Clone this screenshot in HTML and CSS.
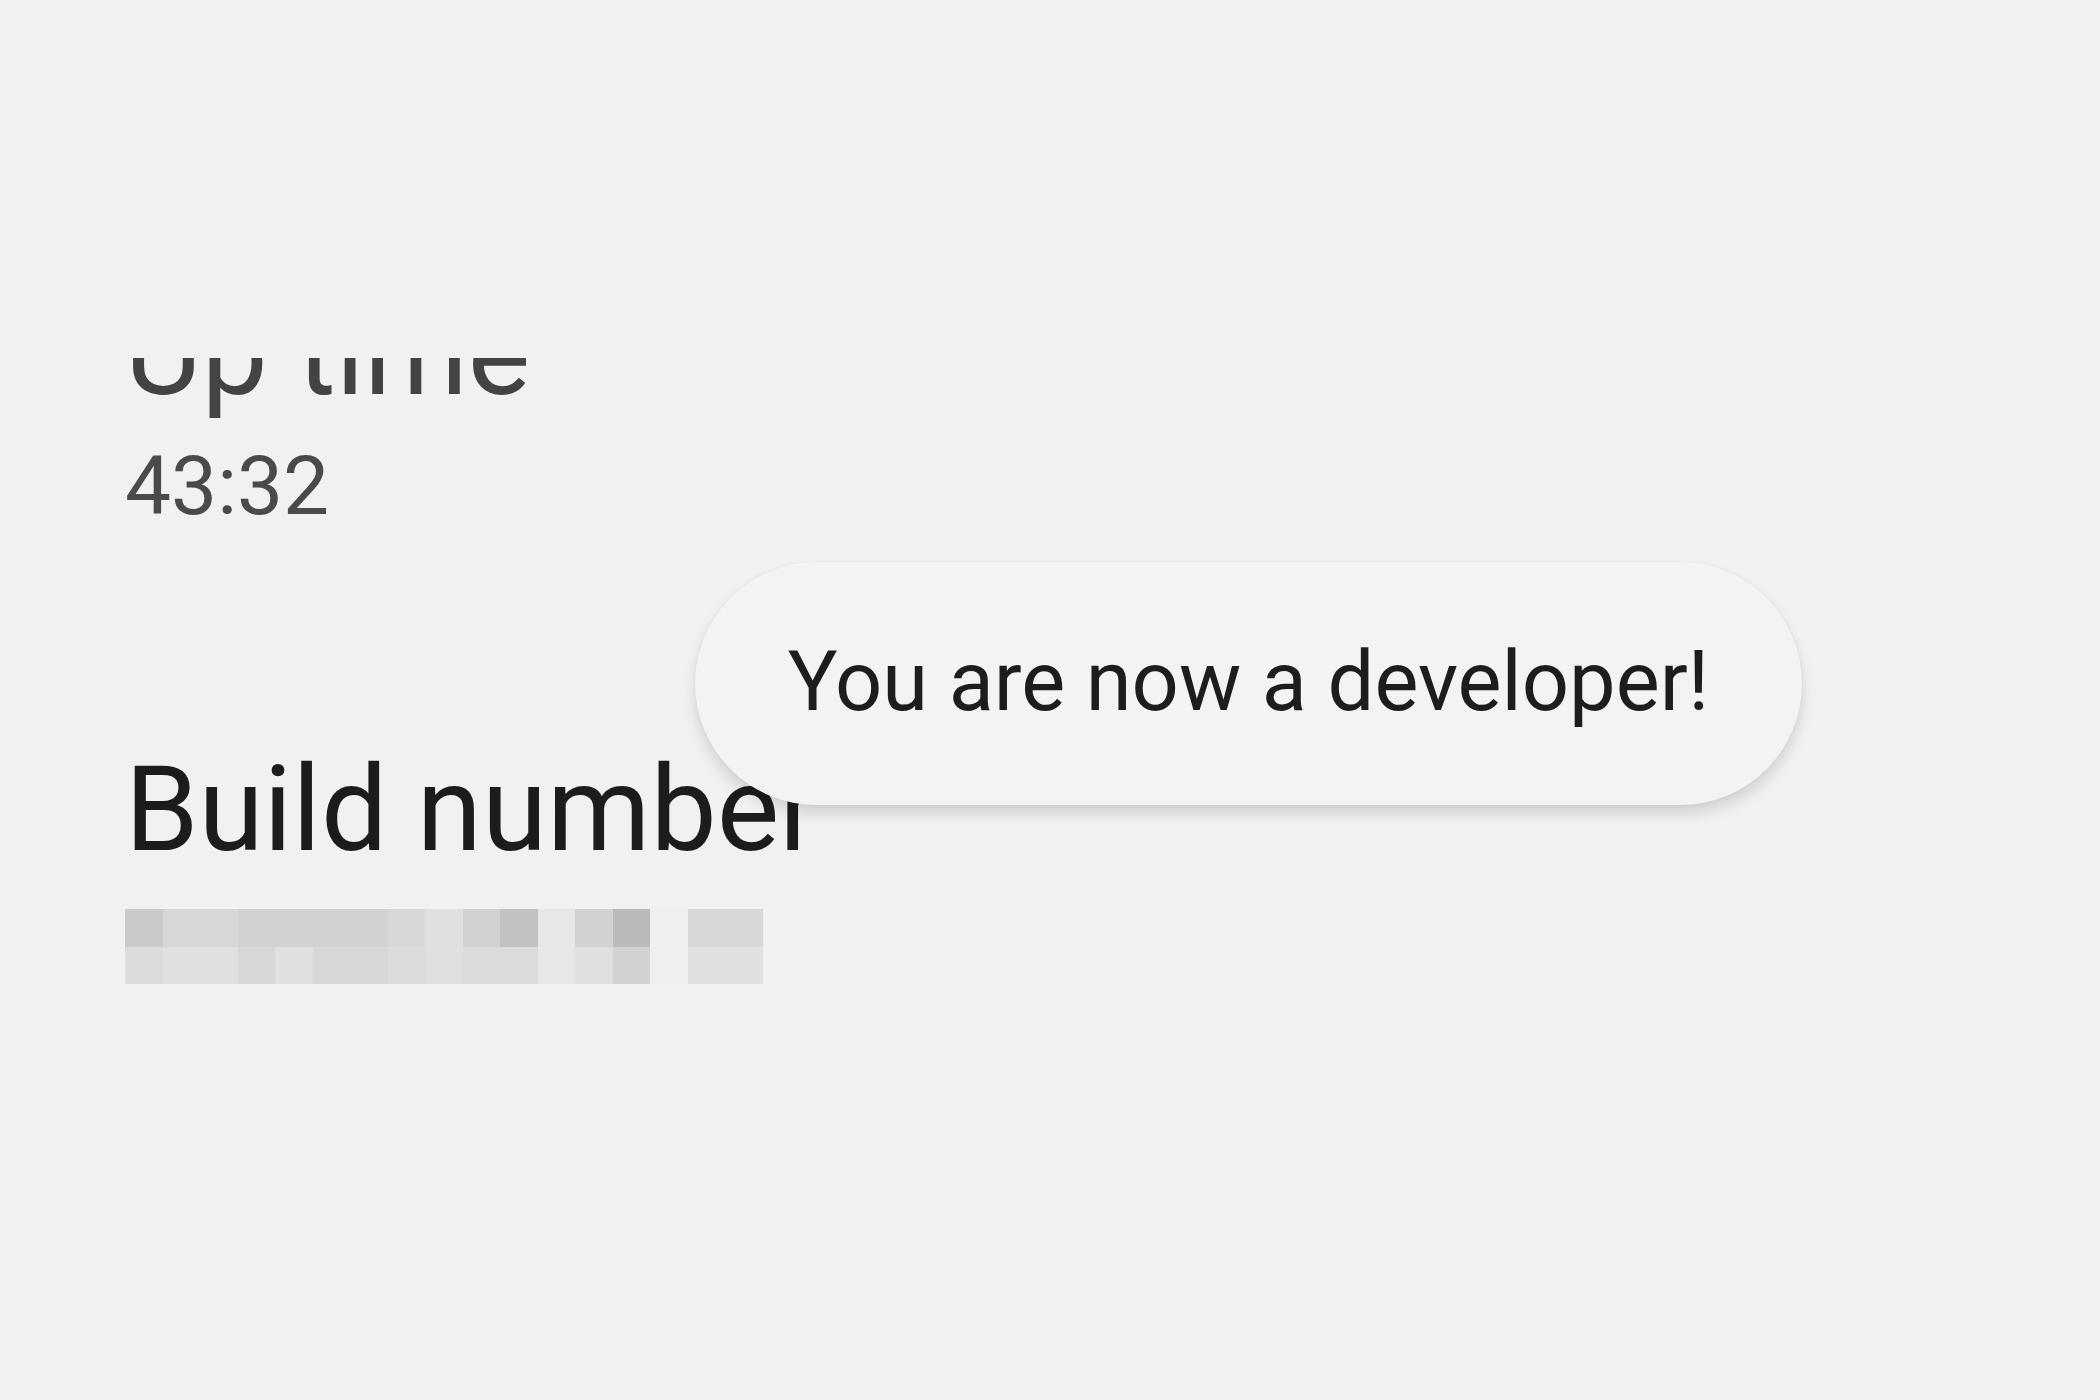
FILE: index.html
```html
<!DOCTYPE html>
<html lang="en">
<head>
<meta charset="utf-8">
<title>About phone</title>
<link rel="stylesheet" href="styles.css">
</head>
<body>
<div class="screen">
  <div class="header-space"></div>
  <div class="viewport">
    <div class="list">
      <div class="item">
        <div class="title faded">Up time</div>
        <div class="summary">43:32</div>
      </div>
      <div class="item">
        <div class="title">Build number</div>
        <div class="pixelated">
          <span class="c g2"></span><span class="c g4"></span><span class="c g4"></span><span class="c g3"></span><span class="c g3"></span><span class="c g3"></span><span class="c g3"></span><span class="c g4"></span><span class="c g6"></span><span class="c g3"></span><span class="c g1"></span><span class="c g7"></span><span class="c g3"></span><span class="c g0"></span><span class="c g8"></span><span class="c g4"></span><span class="c g4"></span>
          <span class="c g5"></span><span class="c g6"></span><span class="c g6"></span><span class="c g4"></span><span class="c g6"></span><span class="c g4"></span><span class="c g4"></span><span class="c g5"></span><span class="c g6"></span><span class="c g5"></span><span class="c g5"></span><span class="c g7"></span><span class="c g6"></span><span class="c g3"></span><span class="c g8"></span><span class="c g6"></span><span class="c g6"></span>
        </div>
      </div>
    </div>
  </div>
  <div class="toast">You are now a developer!</div>
</div>
</body>
</html>
```

FILE: styles.css
```css
html, body {
  margin: 0;
  padding: 0;
  background: #f0f1f3;
}

body {
  font-family: Roboto, "Noto Sans", "Liberation Sans", sans-serif;
}

.screen {
  position: relative;
  width: 2100px;
  height: 1400px;
  overflow: hidden;
}

.header-space {
  height: 358px;
}

.viewport {
  height: 1042px;
  overflow: hidden;
}

.list {
  margin-top: -176px;
}

.item {
  padding: 102px 0 102px 125px;
}

.title {
  font-size: 118px;
  line-height: 140px;
  color: #1c1c1e;
}

.title.faded {
  color: #434345;
}

.summary {
  font-size: 82px;
  line-height: 100px;
  margin-top: 12px;
  color: #4a4a4c;
}

.pixelated {
  margin-top: 29px;
  display: grid;
  grid-template-columns: repeat(17, 37.5px);
  grid-template-rows: repeat(2, 37.5px);
  width: 637.5px;
}

.c { display: block; }
.g0 { background: #b9babc; }
.g1 { background: #c0c1c3; }
.g2 { background: #c9cacc; }
.g3 { background: #d1d2d4; }
.g4 { background: #d6d7d9; }
.g5 { background: #dadbdd; }
.g6 { background: #dfe0e2; }
.g7 { background: #e6e7e9; }
.g8 { background: #eeeff1; }

.toast {
  position: absolute;
  left: 695px;
  top: 562px;
  width: 1107px;
  height: 243px;
  border-radius: 122px;
  background: #f2f3f5;
  box-shadow: 0 9px 14px rgba(0, 0, 0, 0.13), 0 0 3px rgba(0, 0, 0, 0.06);
  display: flex;
  align-items: center;
  justify-content: center;
  font-size: 83px;
  color: #1d1d1f;
  box-sizing: border-box;
  padding-bottom: 4px;
}
```
